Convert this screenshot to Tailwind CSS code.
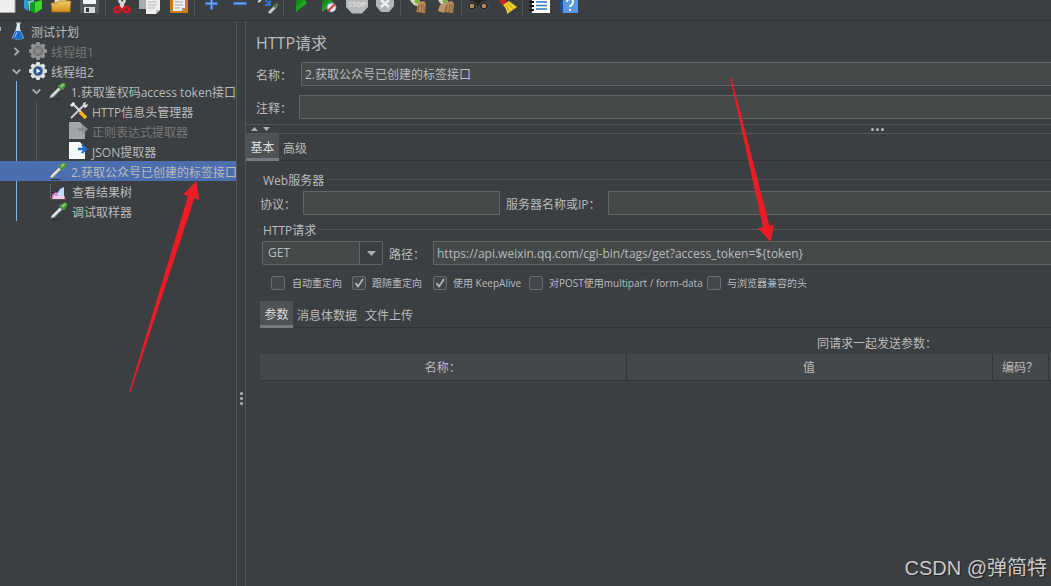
<!DOCTYPE html>
<html lang="zh-CN">
<head>
<meta charset="utf-8">
<title>HTTP请求</title>
<script src="https://cdn.jsdelivr.net/npm/@tailwindcss/browser@4"></script>
</head>
<body class="relative flex h-screen flex-col overflow-hidden bg-[#3c3f41] font-['Open_Sans','Noto_Sans_CJK_SC',sans-serif] text-xs text-[#bbbbbb]">

<svg class="absolute size-0" aria-hidden="true">
  <defs>
    <linearGradient id="metal" x1="0" y1="0" x2="1" y2="1"><stop offset="0" stop-color="#fff"/><stop offset="1" stop-color="#8a8f90"/></linearGradient>
    <linearGradient id="gold" x1="0" y1="0" x2="0" y2="1"><stop offset="0" stop-color="#f2cf6c"/><stop offset="1" stop-color="#cf8a16"/></linearGradient>
    <linearGradient id="green" x1="0" y1="0" x2="1" y2="1"><stop offset="0" stop-color="#0d7a17"/><stop offset="1" stop-color="#35d52a"/></linearGradient>
    <symbol id="pipette" viewBox="0 0 20 20">
      <path d="M2 18h10l3-1-4 2H4z" fill="#2d3031"/>
      <path d="M1.500 17.500 3 14l8-8 2.500 2.500-8 8z" fill="url(#metal)" stroke="#5d6366" stroke-width=".6"/>
      <path d="m3 16 8-8" stroke="#fff" stroke-width="1"/>
      <path d="m10 4.500 5 5 1.500-2 1.500-2.500q1-3-1.500-3.500-1.500-.4-3 1.200l-2 .8z" fill="#4b9a3c"/>
      <path d="m12.500 5 3-2.500 1.500.5-3 3.500z" fill="#93d180"/>
    </symbol>
    <symbol id="gear" viewBox="0 0 20 20">
      <g fill="currentColor"><circle cx="10" cy="10" r="7"/>
      <path d="M8.500 1h3l1 3h-5zM8.500 19h3l1-3h-5zM1 8.500v3l3 1v-5zM19 8.500v3l-3 1v-5z"/>
      <path d="M8.500 1h3l1 3h-5zM8.500 19h3l1-3h-5zM1 8.500v3l3 1v-5zM19 8.500v3l-3 1v-5z" transform="rotate(45 10 10)"/></g>
    </symbol>
    <symbol id="chev-down" viewBox="0 0 9 9"><path d="m.8 2.500 3.700 3.800 3.700-3.800" fill="none" stroke="#adadad" stroke-width="1.800"/></symbol>
    <symbol id="broom" viewBox="0 0 24 14">
      <path d="M5 0h9l2 3-4 3-3-1-2-2z" fill="#d9d4c8"/><circle cx="12" cy="1.500" r="2.300" fill="#74b53b"/>
      <path d="m14 2 5-1 2 3-1 9-9-1q2-4 1-6z" fill="#b5895a"/>
      <path d="M14 5l-1 7m4-8-1 9m3-8v7" stroke="#77512f" stroke-width=".7"/>
    </symbol>
  </defs>
</svg>

<header class="flex h-[21px] shrink-0 items-start overflow-hidden border-b border-[#323435]">
  <div role="toolbar" aria-label="工具栏" class="-ml-[9px] flex shrink-0 items-start">
    <button aria-label="新建" class="flex w-7 justify-center"><svg class="h-3.5 w-6"><path d="M2 0h20v12H2z" fill="#eee"/><path d="M2 12.500h20V0" fill="none" stroke="#aaa"/></svg></button>
    <button aria-label="模板" class="flex w-7 justify-center"><svg class="h-3.5 w-6"><path d="M3 0h4v11L3 8z" fill="#2d9be5"/><path d="M7 1 13 0v9l-5 2z" fill="#82d3f7"/><path d="m9 3 5-2v12l-5-2z" fill="#129820"/><path d="m14 2 7-2v9l-7 4z" fill="#3ed52c"/></svg></button>
    <button aria-label="打开" class="flex w-7 justify-center"><svg class="h-3.5 w-6"><path d="M5 0h15v8H4z" fill="#a4740f"/><path d="M6 0h11v3H6z" fill="#e7dfc8"/><path d="M2 3h6l2-2h12l-1 11H3z" fill="url(#gold)" stroke="#a36d10" stroke-width=".7"/></svg></button>
    <button aria-label="保存" class="flex w-7 justify-center"><svg class="h-3.5 w-6"><path d="M3 0h19v12l-1 1H4l-1-1z" fill="#55585b"/><path d="M6 0h13v4H6z" fill="#f4f4f4"/><path d="M7 7h11v6H7z" fill="#d6d8d9"/><path d="M9 8h3v4H9z" fill="#333"/></svg></button>
    <span class="mx-0.5 h-4 w-px bg-[#555555]"></span>
    <button aria-label="剪切" class="flex w-7 justify-center"><svg class="h-3.5 w-6"><path d="m9 0 5 8M15 0l-5 8" stroke="#d4d7d8" stroke-width="3"/><g fill="none" stroke="#d8161b" stroke-width="2.500"><ellipse cx="7.500" cy="9.500" rx="3" ry="2.500" transform="rotate(-30 7.500 9.500)"/><ellipse cx="16.500" cy="9.500" rx="3" ry="2.500" transform="rotate(30 16.500 9.500)"/></g></svg></button>
    <button aria-label="复制" class="flex w-7 justify-center"><svg class="h-3.5 w-6"><path d="M1 0h12v9H1z" fill="#a9abac"/><path d="M8 0h14v10l-4 4H8z" fill="#eee"/><path d="M18 14v-4h4z" fill="#b7b9ba"/><path d="M10 2h9m-9 3h9m-9 3h7M3 2h3M3 5h3" stroke="#b1b3b4"/></svg></button>
    <button aria-label="粘贴" class="flex w-7 justify-center"><svg class="h-3.5 w-6"><path d="M4 0h18v13H4z" fill="#c87d1d"/><path d="M7 0h12v8l-3 3H7z" fill="#eceeee"/><path d="M9 2h8M9 5h8M9 8h5" stroke="#a5a9aa"/><path d="M16 11V8h3z" fill="#8f9394"/></svg></button>
    <span class="mx-0.5 h-4 w-px bg-[#555555]"></span>
    <button aria-label="展开" class="flex w-7 justify-center"><svg class="h-3.5 w-6"><path d="M12.500 0v10M6 3.500h13" stroke="#2d63b5" stroke-width="3.600"/><path d="M12.500 0v9M7 3.500h11" stroke="#7caaeb" stroke-width="1.400"/></svg></button>
    <button aria-label="折叠" class="flex w-7 justify-center"><svg class="h-3.5 w-6"><path d="M6 3.500h14" stroke="#2d63b5" stroke-width="3.600"/><path d="M7 3.500h12" stroke="#7caaeb" stroke-width="1.400"/></svg></button>
    <button aria-label="切换" class="flex w-7 justify-center"><svg class="h-3.5 w-6"><path d="M3 2 6 0" stroke="#ddd" stroke-width="2"/><path d="m10 0 5 4m0-4v5h-5" fill="none" stroke="#2d73d2" stroke-width="1.800"/><path d="m14 13 7-7" stroke="#c4c8c8" stroke-width="3"/><path d="m19 7 4-3" stroke="#517b47" stroke-width="3"/></svg></button>
    <span class="mx-0.5 h-4 w-px bg-[#555555]"></span>
    <button aria-label="启动" class="flex w-7 justify-center"><svg class="h-3.5 w-6"><path d="M8 0h9l2 3L8 12z" fill="url(#green)"/></svg></button>
    <button aria-label="不停顿启动" class="flex w-7 justify-center"><svg class="h-3.5 w-6"><path d="M6 0h9l3 3L6 12z" fill="url(#green)"/><circle cx="15.500" cy="7.500" r="4.500" fill="#e7edf6" stroke="#7993b9"/><path d="m12 11 7-7" stroke="#d8332f" stroke-width="2"/></svg></button>
    <button aria-label="停止" class="flex w-7 justify-center"><svg class="h-3.5 w-6"><path d="M2 0h22v7l-6 6.500H8L2 7z" fill="#b9b9b9"/><text x="13" y="7" text-anchor="middle" font-size="7" font-weight="700" fill="#dedede">STOP</text></svg></button>
    <button aria-label="关闭" class="flex w-7 justify-center"><svg class="h-3.5 w-6"><path d="M4 0h18v6l-5 6H9L4 6z" fill="#b4b4b4"/><path d="m9 0 8 7m0-7L9 7" stroke="#eee" stroke-width="2.500"/></svg></button>
    <span class="mx-0.5 h-4 w-px bg-[#555555]"></span>
    <button aria-label="清除" class="flex w-7 justify-center"><svg class="h-3.5 w-6"><use href="#broom"/></svg></button>
    <button aria-label="清除全部" class="flex w-7 justify-center"><svg class="h-3.5 w-6"><use href="#broom"/><path d="m7 5 6-2-2 10-6-2z" fill="#c09668"/></svg></button>
    <span class="mx-0.5 h-4 w-px bg-[#555555]"></span>
    <button aria-label="查找" class="flex w-7 justify-center"><svg class="h-3.5 w-6"><path d="M5 0h5l4 0h5l3 6H2z" fill="#242424"/><circle cx="6" cy="6" r="4.300" fill="#222" stroke="#555"/><circle cx="18" cy="6" r="4.300" fill="#222" stroke="#555"/><circle cx="6" cy="6" r="2.300" fill="#b98961"/><circle cx="18" cy="6" r="2.300" fill="#b98961"/></svg></button>
    <button aria-label="重置查找" class="flex w-7 justify-center"><svg class="h-3.5 w-6"><path d="m5 0 5-1 3 4-4 3z" fill="#cf2724"/><path d="m9 5 6-4 8 6-10 7q0-5-4-9z" fill="#f3cf28"/><path d="m12 5 3 6m-1-8 5 6" stroke="#b78b0b" stroke-width=".8"/></svg></button>
    <span class="mx-0.5 h-4 w-px bg-[#555555]"></span>
    <button aria-label="函数助手" class="flex w-7 justify-center"><svg class="h-3.5 w-6"><path d="M5 0h18v13H5z" fill="#fff"/><path d="M9 2h11M9 5.500h11M9 9h11" stroke="#2e79d0" stroke-width="1.500"/><path d="M2 2h5M2 6h5m-5 4h5" stroke="#171717" stroke-width="2"/></svg></button>
    <button aria-label="帮助" class="flex w-7 justify-center"><svg class="h-3.5 w-6"><path d="M5 0h3v13l-3-2z" fill="#214e8d"/><path d="M8 0h15v13H8z" fill="#5b96e5"/><path d="M12 2q0-3 3-3t3 3-3 4v1m0 2v2" fill="none" stroke="#fff" stroke-width="1.800"/></svg></button>
  </div>
</header>

<div class="flex min-h-0 flex-1">
  <aside class="w-[237px] shrink-0 overflow-hidden border-r border-[#555555] whitespace-nowrap">
    <ul role="tree" aria-label="测试计划">
      <li role="treeitem" class="flex h-5 items-center">
        <span class="flex w-2 items-center"><i class="mb-1 h-1 w-px bg-[#adadad]"></i></span>
        <svg class="mr-[3px] h-5 w-5"><path d="M9 2h3v6l4 9q-6 3-12 0l4-9z" fill="#dce8f5"/><path d="M7.500 10h5l3 7q-6 3-11 0z" fill="#1a6fcd"/><path d="m9 11-2 5" stroke="#8bc2fb"/><path d="M8 2h5" stroke="#c4cbd0"/></svg>
        <span class="pt-[3px]">测试计划</span>
      </li>
      <li role="treeitem" class="flex h-5 items-center">
        <span class="w-7 pl-3"><svg class="h-[9px] w-[9px]"><path d="m2.500.8 3.800 3.700-3.800 3.700" fill="none" stroke="#adadad" stroke-width="1.800"/></svg></span>
        <svg class="mr-[3px] h-5 w-5 text-[#929292]"><use href="#gear"/><circle cx="10" cy="10" r="4.500" fill="#808080" stroke="#6b6b6b"/><path d="m8.500 7.500 4 2.500-4 2.500z" fill="#929292"/></svg>
        <span class="pt-[3px] text-[#777777]">线程组1</span>
      </li>
      <li role="treeitem" class="flex h-5 items-center">
        <span class="w-7 pl-3"><svg class="h-[9px] w-[9px]"><use href="#chev-down"/></svg></span>
        <svg class="mr-[3px] h-5 w-5 text-[#e0e2e3]"><use href="#gear"/><circle cx="10" cy="10" r="4.800" fill="#2b5591" stroke="#8395ab"/><path d="m8.500 7.500 4 2.500-4 2.500z" fill="#fff"/></svg>
        <span class="pt-[3px]">线程组2</span>
      </li>
      <li role="treeitem" class="flex h-5 items-center">
        <span class="ml-4 h-5 w-px bg-[#78b8f5]"></span>
        <span class="w-8 pl-[15px]"><svg class="h-[9px] w-[9px]"><use href="#chev-down"/></svg></span>
        <svg class="mr-[3px] h-5 w-5"><use href="#pipette"/></svg>
        <span class="pt-[3px]">1.获取鉴权码access token接口</span>
      </li>
      <li role="treeitem" class="flex h-5 items-center">
        <span class="ml-4 h-5 w-px bg-[#78b8f5]"></span><span class="mr-8 ml-[19px] h-5 w-px bg-[#555759]"></span>
        <svg class="mr-[3px] h-5 w-5"><path d="M2 17 16 3" stroke="#c8cccd" stroke-width="2"/><path d="m14 2 3-1-1 3 3-1-1 3-3 1z" fill="#ddd"/><path d="m3 2 9 9" stroke="#dde0e1" stroke-width="2"/><path d="m1 4 4-3 1 2-3 3z" fill="#eee"/><path d="m11 11 6 6" stroke="#f3b51e" stroke-width="3.500"/></svg>
        <span class="pt-[3px]">HTTP信息头管理器</span>
      </li>
      <li role="treeitem" class="flex h-5 items-center">
        <span class="ml-4 h-5 w-px bg-[#78b8f5]"></span><span class="mr-8 ml-[19px] h-5 w-px bg-[#555759]"></span>
        <svg class="mr-[3px] h-5 w-5"><path d="M0 1h11l5 6v11H0z" fill="#a5a5a5"/><path d="M9 7h4V3l6 5-6 6v-4H9z" fill="#8d8d8d"/></svg>
        <span class="pt-[3px] text-[#777777]">正则表达式提取器</span>
      </li>
      <li role="treeitem" class="flex h-5 items-center">
        <span class="ml-4 h-5 w-px bg-[#78b8f5]"></span><span class="mr-8 ml-[19px] h-5 w-px bg-[#555759]"></span>
        <svg class="mr-[3px] h-5 w-5"><path d="M0 1h11l5 6v11H0z" fill="#f7f8f8"/><path d="M9 8h8m-4-4 4 4-4 4" fill="none" stroke="#1d6fcc" stroke-width="2.400"/></svg>
        <span class="pt-[3px]">JSON提取器</span>
      </li>
      <li role="treeitem" aria-selected="true" class="flex h-5 items-center bg-[#4b6eaf]">
        <span class="mr-8 ml-4 h-5 w-px bg-[#78b8f5]"></span>
        <svg class="mr-[3px] h-5 w-5 shrink-0"><use href="#pipette"/></svg>
        <span class="pt-[3px]">2.获取公众号已创建的标签接口</span>
      </li>
      <li role="treeitem" class="flex h-5 items-center">
        <span class="mr-8 ml-4 h-5 w-px bg-[#78b8f5]"></span>
        <svg class="mr-[3px] h-5 w-5"><path d="M1.500 3v15h16" fill="none" stroke="#707476" stroke-dasharray="2 1"/><path d="M3 18v-4l4-3 4 3 5 1v3z" fill="#e77cc0"/><path d="m8 13 3-5 4-2v12h-4z" fill="#bcdcff"/><path d="m5 14 4 1 6-1v4H4z" fill="#f4c8e5"/></svg>
        <span class="pt-[3px]">查看结果树</span>
      </li>
      <li role="treeitem" class="flex h-5 items-center">
        <span class="mr-8 ml-4 h-5 w-px bg-[#78b8f5]"></span>
        <svg class="mr-[3px] h-5 w-5"><use href="#pipette"/></svg>
        <span class="pt-[3px]">调试取样器</span>
      </li>
    </ul>
  </aside>
  <div role="separator" class="flex w-2 shrink-0 flex-col items-center justify-center pt-[189px]">
    <div class="flex flex-col gap-0.5"><i class="size-[3px] rounded-full bg-[#b4b4b4]"></i><i class="size-[3px] rounded-full bg-[#b4b4b4]"></i><i class="size-[3px] rounded-full bg-[#b4b4b4]"></i></div>
  </div>

  <main class="flex min-w-0 flex-1 flex-col border-l border-[#555555]">
    <section class="pt-2.5">
      <h1 class="pl-2.5 text-base leading-6">HTTP请求</h1>
      <div class="mt-[7px] flex h-6 items-center pl-2.5">
        <label for="name" class="w-[45px] shrink-0 pt-[3px]">名称：</label>
        <input id="name" value="2.获取公众号已创建的标签接口" class="h-6 min-w-0 flex-1 border border-r-0 border-[#646464] bg-[#45494a] px-[3px] outline-none">
      </div>
      <div class="mt-[9px] flex h-6 items-center pl-2.5">
        <label for="note" class="w-[43px] shrink-0 pt-[3px]">注释：</label>
        <input id="note" class="h-6 min-w-0 flex-1 border border-r-0 border-[#646464] bg-[#45494a] px-[3px] outline-none">
      </div>
    </section>
    <div role="separator" class="mt-[5px] flex h-2.5 shrink-0 items-center border-y border-[#555555] pl-[5px]">
      <svg class="h-1.5 w-5"><path d="m0 5 3.500-4L7 5zM12 1h7l-3.500 4z" fill="#adadad"/></svg>
      <div class="mx-auto flex gap-0.5 pl-[433px]"><i class="size-[3px] rounded-full bg-[#b4b4b4]"></i><i class="size-[3px] rounded-full bg-[#b4b4b4]"></i><i class="size-[3px] rounded-full bg-[#b4b4b4]"></i></div>
    </div>
    <div role="tablist" class="flex h-[27px] shrink-0 items-stretch border-b border-[#323435]">
      <button role="tab" aria-selected="true" class="-mb-px w-[33px] border-b-3 border-[#747a80] bg-[#4e5254] px-1 pt-1 text-[#dddddd]">基本</button>
      <button role="tab" class="px-1 pt-[3px]">高级</button>
    </div>

    <section class="pl-3.5">
      <div class="-ml-0.5 mt-2 flex h-5 items-center gap-[3px]"><span class="h-px w-[2px] bg-[#555555]"></span><h2 class="pt-[3px]">Web服务器</h2><span class="h-px flex-1 bg-[#555555]"></span></div>
      <div class="mt-0.5 flex h-6 items-center">
        <label for="proto" class="w-[43px] shrink-0 pt-[3px]">协议：</label>
        <input id="proto" class="h-6 w-[197px] border border-[#646464] bg-[#45494a] px-[3px]">
        <label for="server" class="ml-1.5 w-[102px] shrink-0 pt-[3px]">服务器名称或IP：</label>
        <input id="server" class="h-6 min-w-0 flex-1 border border-r-0 border-[#646464] bg-[#45494a] px-[3px]">
      </div>
      <div class="-ml-0.5 mt-1 flex h-5 items-center gap-[3px]"><span class="h-px w-[2px] bg-[#555555]"></span><h2 class="pt-[3px]">HTTP请求</h2><span class="h-px flex-1 bg-[#555555]"></span></div>
      <div class="mt-0.5 flex h-6 items-center pl-0.5">
        <div class="grid h-6 w-[121px] shrink-0">
          <select aria-label="方法" class="col-start-1 row-start-1 appearance-none rounded-xs border border-[#646464] bg-[#45494a] px-[5px]"><option>GET</option></select>
          <span class="pointer-events-none col-start-1 row-start-1 my-px mr-px flex w-[23px] items-center justify-center justify-self-end border-l border-[#646464] bg-[#3c3f41]"><svg class="h-[5px] w-[9px]"><path d="M0 0h9L4.500 5z" fill="#adadad"/></svg></span>
        </div>
        <label for="path" class="ml-1.5 w-11 shrink-0 pt-[3px]">路径：</label>
        <input id="path" value="https://api.weixin.qq.com/cgi-bin/tags/get?access_token=${token}" class="h-6 min-w-0 flex-1 border border-r-0 border-[#646464] bg-[#45494a] px-[3px]">
      </div>
      <div class="mt-2.5 flex h-4 items-center pl-[11px] text-[10px] whitespace-nowrap">
        <label class="flex w-[81px] shrink-0 items-center gap-[7px]"><input type="checkbox" class="size-3.5 appearance-none rounded-xs border border-[#6b6b6b] bg-[#43494a]"><span class="pt-0.5">自动重定向</span></label>
        <label class="flex w-[81px] shrink-0 items-center gap-[6px]"><span class="grid"><input type="checkbox" checked class="col-start-1 row-start-1 size-3.5 appearance-none rounded-xs border border-[#6b6b6b] bg-[#43494a]"><svg class="pointer-events-none col-start-1 row-start-1 size-3.5"><path d="m3.500 7 2.500 3.500L11 3" fill="none" stroke="#b4b4b4" stroke-width="1.800"/></svg></span><span class="pt-0.5">跟随重定向</span></label>
        <label class="flex w-24 shrink-0 items-center gap-[6px]"><span class="grid"><input type="checkbox" checked class="col-start-1 row-start-1 size-3.5 appearance-none rounded-xs border border-[#6b6b6b] bg-[#43494a]"><svg class="pointer-events-none col-start-1 row-start-1 size-3.5"><path d="m3.500 7 2.500 3.500L11 3" fill="none" stroke="#b4b4b4" stroke-width="1.800"/></svg></span><span class="pt-0.5">使用 KeepAlive</span></label>
        <label class="flex w-[178px] shrink-0 items-center gap-[6px]"><input type="checkbox" class="size-3.5 appearance-none rounded-xs border border-[#6b6b6b] bg-[#43494a]"><span class="pt-0.5">对POST使用multipart / form-data</span></label>
        <label class="flex shrink-0 items-center gap-[6px]"><input type="checkbox" class="size-3.5 appearance-none rounded-xs border border-[#6b6b6b] bg-[#43494a]"><span class="pt-0.5">与浏览器兼容的头</span></label>
      </div>
      <div role="tablist" class="mt-2.5 flex h-[27px] items-stretch border-b border-[#323435]">
        <button role="tab" aria-selected="true" class="-mb-px w-[33px] border-b-3 border-[#747a80] bg-[#4e5254] px-1 pt-1 text-[#dddddd]">参数</button>
        <button role="tab" class="px-1 pt-[3px]">消息体数据</button>
        <button role="tab" class="px-1 pt-[3px]">文件上传</button>
      </div>
      <h3 class="mt-1.5 pl-[557px] leading-5 whitespace-nowrap">同请求一起发送参数：</h3>
      <table class="w-full table-fixed border-collapse">
        <thead><tr class="h-[26px] border-b border-[#323435] bg-[#45484a]">
          <th class="border-r border-[#323435] pt-0.5 font-normal">名称：</th>
          <th class="border-r border-[#323435] pt-0.5 font-normal">值</th>
          <th class="w-14 border-r border-[#323435] pt-0.5 font-normal whitespace-nowrap">编码？</th>
          <td class="w-[3px]"></td>
        </tr></thead>
      </table>
    </section>
    <footer class="mt-auto self-end pr-1 pb-1 font-['Liberation_Sans','Noto_Sans_CJK_SC',sans-serif] text-xl leading-7 text-[#c8c8c8] text-shadow-[1px_1px_1px_#222222]">CSDN @弹简特</footer>
  </main>
</div>

<svg class="pointer-events-none absolute top-0 left-0 h-[400px] w-[800px]" fill="#ed1c24" aria-hidden="true">
  <path d="M129.300 391.500 188 196l-5-1.500L196.500 181 199 200l-4.500-2-64 194z"/>
  <path d="M731.500 78 730.300 78.500 763 227.500l-5 .5 12.500 14L774 225l-4.500 1z"/>
</svg>
</body>
</html>
